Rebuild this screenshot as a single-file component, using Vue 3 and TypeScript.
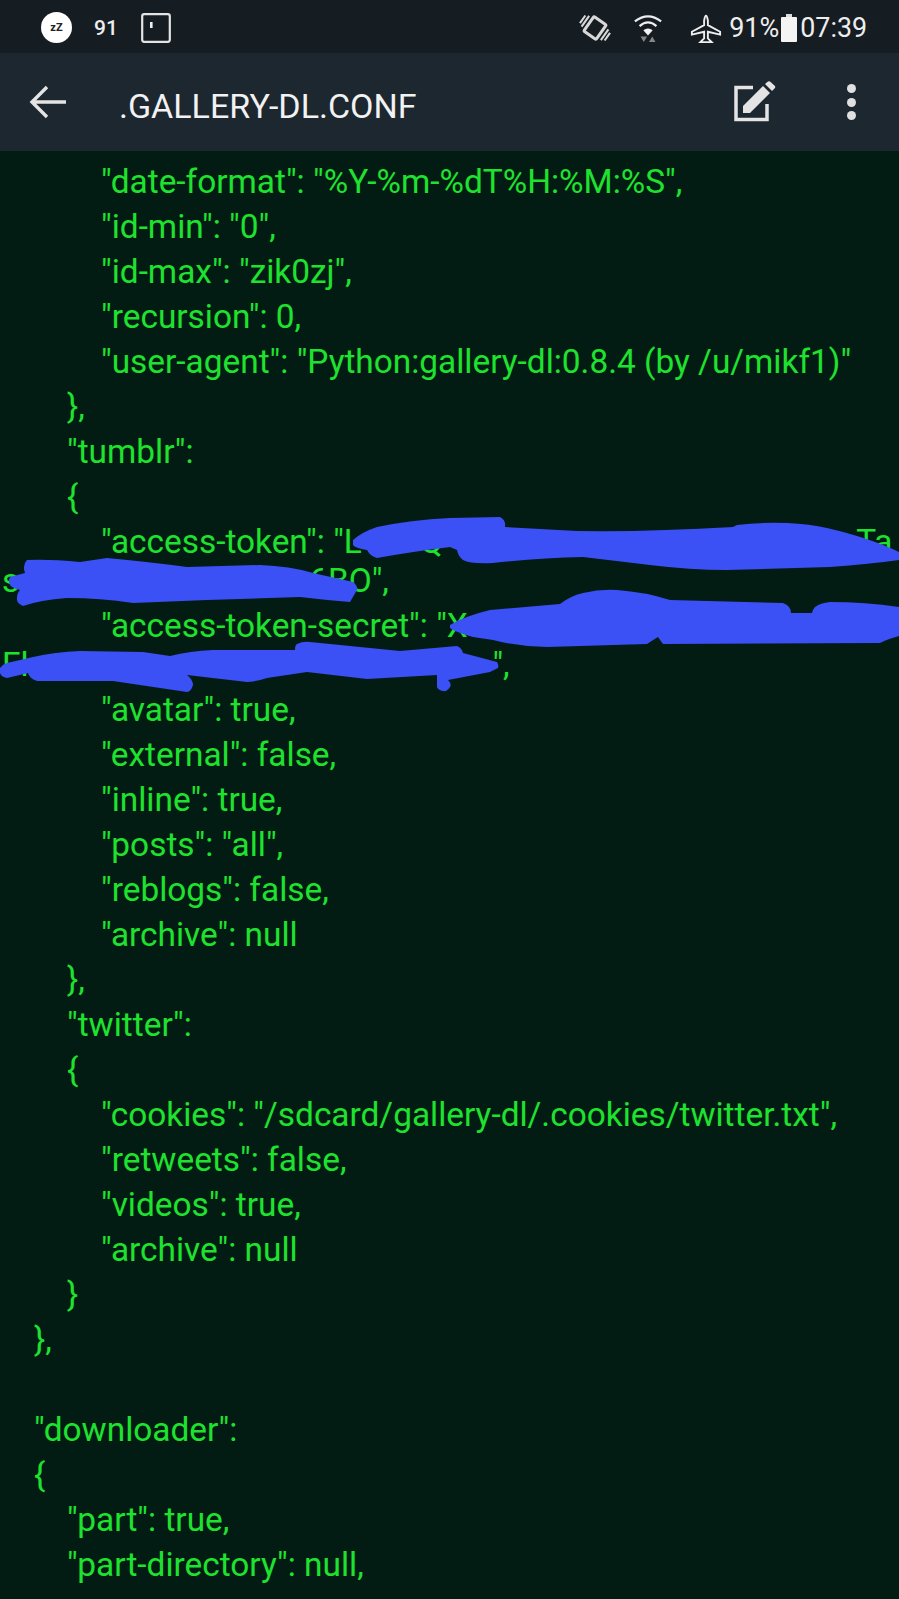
<script setup lang="ts">
interface Line { text: string; indent: string; wrapped?: boolean }
const gap = (n: number): string => ' '.repeat(n)
const lines: Line[] = [
  { text: '"date-format": "%Y-%m-%dT%H:%M:%S",', indent: 'in2' },
  { text: '"id-min": "0",', indent: 'in2' },
  { text: '"id-max": "zik0zj",', indent: 'in2' },
  { text: '"recursion": 0,', indent: 'in2' },
  { text: '"user-agent": "Python:gallery-dl:0.8.4 (by /u/mikf1)"', indent: 'in2' },
  { text: '},', indent: 'in1' },
  { text: '"tumblr":', indent: 'in1' },
  { text: '{', indent: 'in1' },
  { text: '"access-token": "L' + gap(7) + 'Q' + gap(50) + 'Ta', indent: 'in2' },
  { text: 's' + gap(35) + '6BO",', indent: 'in0', wrapped: true },
  { text: '"access-token-secret": "X', indent: 'in2' },
  { text: 'Fl' + gap(56) + '",', indent: 'in0', wrapped: true },
  { text: '"avatar": true,', indent: 'in2' },
  { text: '"external": false,', indent: 'in2' },
  { text: '"inline": true,', indent: 'in2' },
  { text: '"posts": "all",', indent: 'in2' },
  { text: '"reblogs": false,', indent: 'in2' },
  { text: '"archive": null', indent: 'in2' },
  { text: '},', indent: 'in1' },
  { text: '"twitter":', indent: 'in1' },
  { text: '{', indent: 'in1' },
  { text: '"cookies": "/sdcard/gallery-dl/.cookies/twitter.txt",', indent: 'in2' },
  { text: '"retweets": false,', indent: 'in2' },
  { text: '"videos": true,', indent: 'in2' },
  { text: '"archive": null', indent: 'in2' },
  { text: '}', indent: 'in1' },
  { text: '},', indent: 'in05' },
  { text: '\u00a0', indent: 'in0' },
  { text: '"downloader":', indent: 'in05' },
  { text: '{', indent: 'in05' },
  { text: '"part": true,', indent: 'in1' },
  { text: '"part-directory": null,', indent: 'in1' },
]
</script>

<template>
  <div class="screen">
    <header class="status">
      <div class="status-left">
        <span class="zz">zZ</span>
        <span class="count">91</span>
        <svg class="box" width="30" height="30" viewBox="0 0 30 30"><rect x="1.2" y="1.2" width="27.6" height="27.6" rx="2" fill="none" stroke="#e4e4e4" stroke-width="2.2"/><rect x="9" y="9" width="2.6" height="6" fill="#eee"/></svg>
      </div>
      <div class="status-right">
        <svg width="34" height="32" viewBox="0 0 36 34" fill="none" stroke="#d8d8d8"><g transform="rotate(35 18 17)"><rect x="10" y="7.5" width="16" height="19" rx="1.5" stroke-width="3.2"/><path d="M5.5 10 V24M2 12 V22M30.5 10 V24M34 12 V22" stroke-width="2.2"/></g></svg>
        <svg class="wifi" width="30" height="32" viewBox="0 0 32 32"><path d="M2 9 Q16 -2 30 9M7 14 Q16 6 25 14" fill="none" stroke="#eee" stroke-width="2.3"/><path d="M11 18.5 Q16 14.5 21 18.5 L16 24 Z" fill="#f4f4f4"/><path d="M8 25 H15 L11.5 31 Z" fill="#858585"/><path d="M20.5 25 L24 31 H17 Z" fill="#858585"/></svg>
        <svg class="plane" width="34" height="32" viewBox="0 0 34 34"><path d="M15 9 Q17 -1 19 9 V14 L32 21 V24 L19 21 V28 L23 32 H11 L15 28 V21 L2 24 V21 L15 14 Z" fill="none" stroke="#eee" stroke-width="2"/></svg>
        <span class="pct">91%</span>
        <svg class="batt" width="16" height="28" viewBox="0 0 16 28"><rect x="5" y="0" width="6" height="4" fill="#ddd"/><rect x="0" y="3" width="16" height="25" rx="1" fill="#f4f4f4"/></svg>
        <span class="time">07:39</span>
      </div>
    </header>
    <nav class="toolbar">
      <svg class="back" width="38" height="34" viewBox="0 0 38 34" fill="none" stroke="#e4e4e4" stroke-width="3.4"><path d="M37 17 H3M18 2 L3 17 L18 32"/></svg>
      <span class="title">.GALLERY-DL.CONF</span>
      <svg class="edit" width="44" height="42" viewBox="0 0 44 42" fill="#e4e4e4"><path d="M19 6.5 H2 V38.5 H33 V23" fill="none" stroke="#e4e4e4" stroke-width="3.5"/><path d="M9 32 V25 L29 5 L36 12 L16 32 Z"/><path d="M31 3 L34 .5 Q35 0 36 .5 L41 5 Q41.5 6 41 7 L38 10 Z"/></svg>
      <div class="dots"><i></i><i></i><i></i></div>
    </nav>
    <main class="editor">
      <div v-for="(l, i) in lines" :key="i" class="line" :class="[l.indent, { wrapped: l.wrapped }]">{{ l.text }}</div>
      <svg class="scribble" width="899" height="200" viewBox="0 500 899 200" fill="#3b50f5">
        <path d="M353 540 Q362 532 377 527 Q410 520 450 518 L500 517 Q506 520 505 527 L577 531 Q650 532 733 527 L737 525 Q760 522 787 523 Q810 524 827 528 Q870 538 899 552 V560 Q870 564 830 567 L727 570 Q690 570 650 565 L583 557 Q540 558 493 563 Q470 564 463 560 Q458 556 457 550 L450 547 Q410 552 377 558 Q370 556 367 550 Q355 548 353 545 Z"/>
        <path d="M27 560 Q50 559 80 562 L107 558 Q150 562 187 567 L260 565 Q290 566 313 573 L353 582 Q358 586 357 590 L350 602 Q325 600 300 597 L207 600 L133 603 Q100 598 67 598 Q40 600 23 606 Q16 603 17 598 Q17 593 20 590 Q12 588 10 585 Q8 580 10 577 L25 573 Q22 565 27 560 Z"/>
        <path d="M450 625 Q465 616 490 610 L560 604 Q570 596 583 593 Q600 589 617 590 Q645 592 670 600 L783 603 Q791 606 791 613 H812 Q813 609 815 607 Q820 603 830 602 Q865 602 899 607 V636 Q885 640 880 643 L663 644 Q660 640 658 637 Q653 640 647 644 L547 647 Q520 647 493 640 L473 637 Q455 632 450 628 Z"/>
        <path d="M0 668 Q3 664 7 663 L33 657 Q55 652 80 651 L143 652 L170 656 Q190 651 213 650 L295 650 Q295 645 297 644 Q303 641 310 642 L400 651 L457 646 Q462 648 463 653 L497 662 Q499 665 498 668 L490 672 L448 680 Q452 684 450 687 Q447 692 443 691 Q438 690 437 687 V675 L367 679 L307 672 L267 678 Q255 682 247 682 L187 675 Q193 680 193 685 Q191 692 187 692 L113 681 H37 Q29 678 28 673 L7 678 Q1 677 0 673 Z"/>
      </svg>
    </main>
  </div>
</template>

<style scoped>
.screen { width: 899px; height: 1599px; overflow: hidden; background: #021c14; display: flex; flex-direction: column; font-family: Roboto, "Liberation Sans", sans-serif; }
.status { height: 53px; flex: none; background: #161d22; display: flex; align-items: center; justify-content: space-between; padding: 2px 32px 0 41px; box-sizing: border-box; color: #eee; }
.status-left, .status-right { display: flex; align-items: center; }
.zz { width: 31px; height: 31px; border-radius: 50%; background: #fff; color: #222; font-size: 11px; font-weight: 700; display: flex; align-items: center; justify-content: center; }
.count { margin-left: 22px; font-size: 21px; font-weight: 500; }
.box { margin-left: 23px; }
.wifi { margin-left: 21px; }
.plane { margin-left: 26px; }
.pct { font-size: 27px; margin-left: 6px; }
.batt { margin: 0 3px 0 2px; }
.time { font-size: 26.8px; }
.toolbar { height: 98px; flex: none; background: #1c272f; display: flex; align-items: center; padding-left: 29px; padding-right: 43px; box-sizing: border-box; }
.title { margin-left: 52px; padding-top: 8px; color: #f2f2f2; font-size: 34px; }
.edit { margin-left: auto; }
.dots { margin-left: 69px; display: flex; flex-direction: column; gap: 4.5px; }
.dots i { display: block; width: 9px; height: 9px; border-radius: 50%; background: #e0e0e0; }
.editor { flex: 1; position: relative; padding-top: 8px; overflow: hidden; }
.line { color: #1fe22f; font-size: 33.4px; line-height: 45px; height: 45px; white-space: pre; }
.wrapped { margin-top: -6px; }
.in0 { padding-left: 2px; }
.in05 { padding-left: 34px; }
.in1 { padding-left: 67px; }
.in2 { padding-left: 101px; }
.scribble { position: absolute; left: 0; top: 349px; }
</style>
